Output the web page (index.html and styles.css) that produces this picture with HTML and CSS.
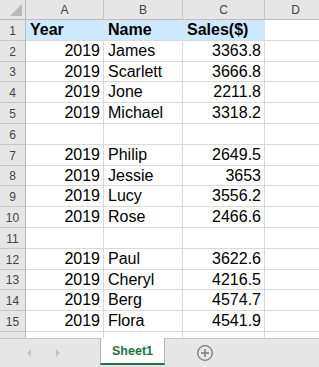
FILE: index.html
```html
<!DOCTYPE html>
<html>
<head>
<meta charset="utf-8">
<link rel="stylesheet" href="styles.css">
</head>
<body>
<div class="app">
  <div class="sheet">
    <div class="corner"><span class="tri"></span></div>
    <div class="colh">A</div><div class="colh">B</div><div class="colh">C</div><div class="colh">D</div>

    <div class="rowh">1</div><div class="c hdr b">Year</div><div class="c hdr b">Name</div><div class="c hdr b last">Sales($)</div><div class="c"></div>
    <div class="rowh">2</div><div class="c n">2019</div><div class="c">James</div><div class="c n">3363.8</div><div class="c"></div>
    <div class="rowh">3</div><div class="c n">2019</div><div class="c">Scarlett</div><div class="c n">3666.8</div><div class="c"></div>
    <div class="rowh">4</div><div class="c n">2019</div><div class="c">Jone</div><div class="c n">2211.8</div><div class="c"></div>
    <div class="rowh">5</div><div class="c n">2019</div><div class="c">Michael</div><div class="c n">3318.2</div><div class="c"></div>
    <div class="rowh">6</div><div class="c"></div><div class="c"></div><div class="c"></div><div class="c"></div>
    <div class="rowh">7</div><div class="c n">2019</div><div class="c">Philip</div><div class="c n">2649.5</div><div class="c"></div>
    <div class="rowh">8</div><div class="c n">2019</div><div class="c">Jessie</div><div class="c n">3653</div><div class="c"></div>
    <div class="rowh">9</div><div class="c n">2019</div><div class="c">Lucy</div><div class="c n">3556.2</div><div class="c"></div>
    <div class="rowh">10</div><div class="c n">2019</div><div class="c">Rose</div><div class="c n">2466.6</div><div class="c"></div>
    <div class="rowh">11</div><div class="c"></div><div class="c"></div><div class="c"></div><div class="c"></div>
    <div class="rowh">12</div><div class="c n">2019</div><div class="c">Paul</div><div class="c n">3622.6</div><div class="c"></div>
    <div class="rowh">13</div><div class="c n">2019</div><div class="c">Cheryl</div><div class="c n">4216.5</div><div class="c"></div>
    <div class="rowh">14</div><div class="c n">2019</div><div class="c">Berg</div><div class="c n">4574.7</div><div class="c"></div>
    <div class="rowh">15</div><div class="c n">2019</div><div class="c">Flora</div><div class="c n">4541.9</div><div class="c"></div>
    <div class="rowh">16</div><div class="c"></div><div class="c"></div><div class="c"></div><div class="c"></div>
  </div>
  <div class="tabbar">
    <div class="navs">
      <svg class="nav" width="6" height="10" viewBox="0 0 6 10"><polygon points="5,1 1,5 5,9" fill="#c3c3c3"/></svg>
      <svg class="nav" width="6" height="10" viewBox="0 0 6 10"><polygon points="1,1 5,5 1,9" fill="#c3c3c3"/></svg>
    </div>
    <div class="tab">Sheet1</div>
    <div class="add">
      <svg width="18" height="18" viewBox="0 0 18 18"><circle cx="9" cy="9" r="7.3" fill="none" stroke="#7b7b7b" stroke-width="1.3"/><path d="M9 5v8M5 9h8" stroke="#7b7b7b" stroke-width="1.4"/></svg>
    </div>
  </div>
</div>
</body>
</html>
```

FILE: styles.css
```css
html, body {
  margin: 0;
  padding: 0;
  background: #ffffff;
  overflow: hidden;
}
.app {
  width: 319px;
  height: 367px;
  display: flex;
  flex-direction: column;
  overflow: hidden;
}
.sheet {
  height: 338px;
  overflow: hidden;
  flex: none;
  display: grid;
  grid-template-columns: 26px 78px 79px 82px 62px;
  grid-template-rows: 20px repeat(16, 20.8px);
  font-family: "Liberation Sans", Arial, sans-serif;
}
.corner, .colh, .rowh {
  background: #e6e6e6;
  box-sizing: border-box;
  color: #444444;
  font-size: 12px;
}
.corner {
  border-right: 1px solid #bcbcbc;
  border-bottom: 1px solid #bcbcbc;
  position: relative;
}
.tri {
  position: absolute;
  right: 3px;
  bottom: 3px;
  width: 0;
  height: 0;
  border-left: 12px solid transparent;
  border-bottom: 12px solid #b9b9b9;
}
.colh {
  border-right: 1px solid #c6c6c6;
  border-bottom: 1px solid #bcbcbc;
  display: flex;
  align-items: center;
  justify-content: center;
  padding-top: 1px;
}
.rowh {
  border-right: 1px solid #bcbcbc;
  border-bottom: 1px solid #c6c6c6;
  display: flex;
  align-items: center;
  justify-content: center;
  padding-top: 2px;
}
.c {
  box-sizing: border-box;
  border-right: 1px solid #d9d9d9;
  border-bottom: 1px solid #d9d9d9;
  font-size: 16px;
  line-height: 19.8px;
  color: #000000;
  padding: 0 4px 0 4px;
  white-space: nowrap;
  overflow: visible;
}
.n {
  text-align: right;
  padding-right: 3px;
}
.hdr {
  background: #cde9fb;
  border-right-color: #cde9fb;
}
.b {
  font-weight: bold;
}
.tabbar {
  flex: 1;
  background: #e6e6e6;
  border-top: 1px solid #c6c6c6;
  display: flex;
  align-items: stretch;
  position: relative;
}
.navs {
  width: 100px;
  display: flex;
  align-items: center;
  padding-left: 26px;
  box-sizing: border-box;
  gap: 23px;
}
.tab {
  margin-top: -1px;
  width: 65px;
  height: 27px;
  box-sizing: border-box;
  background: #ffffff;
  border-left: 1px solid #b6b6b6;
  border-right: 1px solid #b6b6b6;
  border-bottom: 2px solid #217346;
  color: #217346;
  font-family: "Liberation Sans", Arial, sans-serif;
  font-weight: bold;
  font-size: 12.5px;
  display: flex;
  align-items: center;
  justify-content: center;
  padding-top: 1px;
}
.add {
  margin-left: 31px;
  display: flex;
  align-items: center;
  padding-bottom: 1px;
}
.add svg {
  display: block;
}
```
